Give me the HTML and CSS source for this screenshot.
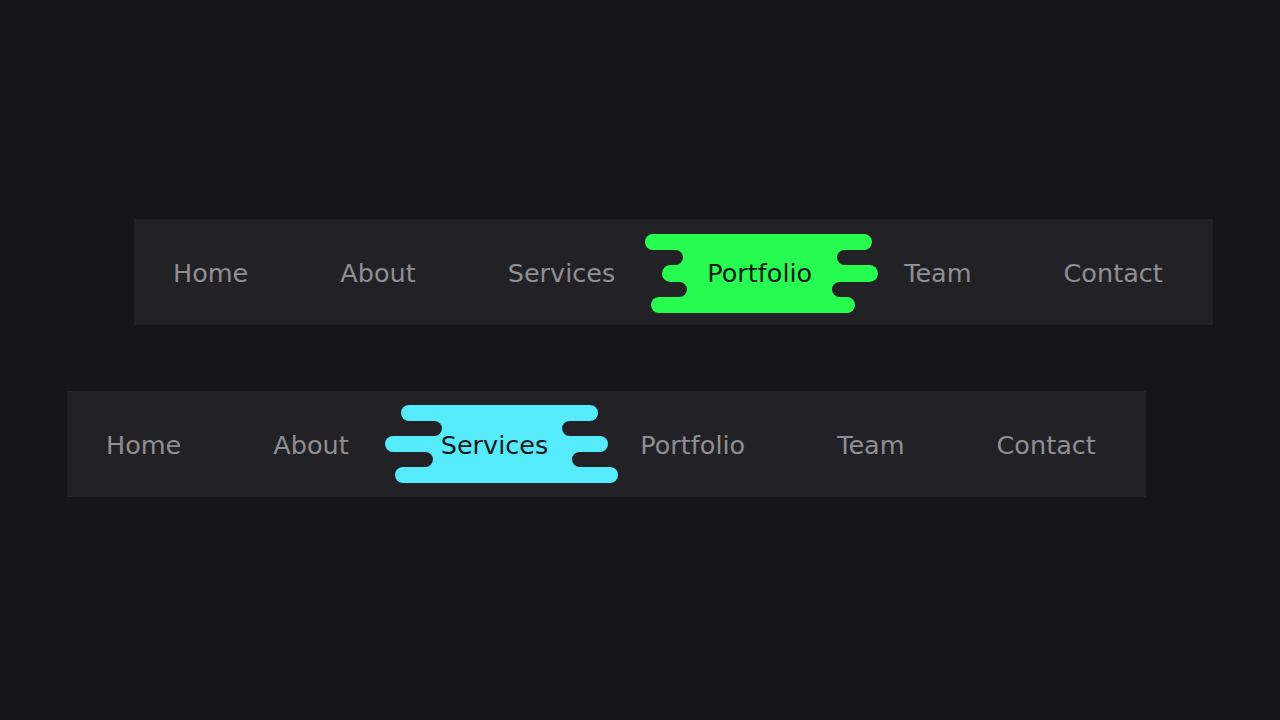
FILE: index.html
```html
<!DOCTYPE html>
<html lang="en">
<head>
<meta charset="utf-8">
<title>Liquid nav</title>
<link rel="stylesheet" href="styles.css">
</head>
<body>
<main class="page">
  <nav class="nav nav-first">
    <a class="item">Home</a>
    <a class="item">About</a>
    <a class="item">Services</a>
    <a class="item active">
      <svg class="blob blob-green" viewBox="0 0 233 79" width="233" height="79" aria-hidden="true">
        <g fill="#27fc50">
          <rect x="0" y="0" width="227" height="16" rx="8"/>
          <rect x="17" y="31" width="216" height="17" rx="8.5"/>
          <rect x="6" y="63" width="204" height="16" rx="8"/>
          <rect x="30" y="12" width="170" height="55"/>
        </g>
        <g fill="#222226">
          <rect x="-40" y="16" width="78" height="15" rx="7.5"/>
          <rect x="192" y="16" width="80" height="15" rx="7.5"/>
          <rect x="-40" y="48" width="82" height="15" rx="7.5"/>
          <rect x="187" y="48" width="80" height="15" rx="7.5"/>
        </g>
      </svg>
      <span class="label">Portfolio</span>
    </a>
    <a class="item">Team</a>
    <a class="item">Contact</a>
  </nav>

  <nav class="nav nav-second">
    <a class="item">Home</a>
    <a class="item">About</a>
    <a class="item active">
      <svg class="blob blob-cyan" viewBox="0 0 233 78" width="233" height="78" aria-hidden="true">
        <g fill="#55ebfd">
          <rect x="16" y="0" width="197" height="16" rx="8"/>
          <rect x="0" y="31" width="223" height="16" rx="8"/>
          <rect x="10" y="62" width="223" height="16" rx="8"/>
          <rect x="35" y="12" width="165" height="54"/>
        </g>
        <g fill="#222226">
          <rect x="-40" y="16" width="97" height="15" rx="7.5"/>
          <rect x="177" y="16" width="90" height="15" rx="7.5"/>
          <rect x="-40" y="47" width="88" height="15" rx="7.5"/>
          <rect x="187" y="47" width="80" height="15" rx="7.5"/>
        </g>
      </svg>
      <span class="label">Services</span>
    </a>
    <a class="item">Portfolio</a>
    <a class="item">Team</a>
    <a class="item">Contact</a>
  </nav>
</main>
</body>
</html>
```

FILE: styles.css
```css
html, body {
  margin: 0;
  padding: 0;
  background: #161618;
}

body {
  width: 1280px;
  height: 720px;
  overflow: hidden;
  font-family: "DejaVu Sans", "Liberation Sans", sans-serif;
}

.page {
  display: flex;
  flex-direction: column;
  align-items: flex-start;
  gap: 66px;
  padding-top: 219px;
}

.nav {
  box-sizing: border-box;
  width: 1079px;
  height: 106px;
  background: #222226;
  display: flex;
  align-items: stretch;
  gap: 92px;
  padding-left: 39px;
}

.nav-first {
  margin-left: 134px;
}

.nav-second {
  margin-left: 67px;
}

.item {
  position: relative;
  display: flex;
  align-items: center;
  padding-top: 2px;
  font-size: 25.5px;
  color: #8f8f93;
  text-decoration: none;
  white-space: nowrap;
}

.item.active {
  color: #18181a;
}

.label {
  position: relative;
  z-index: 1;
}

.blob {
  position: absolute;
  z-index: 0;
  display: block;
}

.blob-green {
  left: calc(50% - 115px);
  top: 15px;
}

.blob-cyan {
  left: calc(50% - 109.5px);
  top: 13.5px;
}
```
